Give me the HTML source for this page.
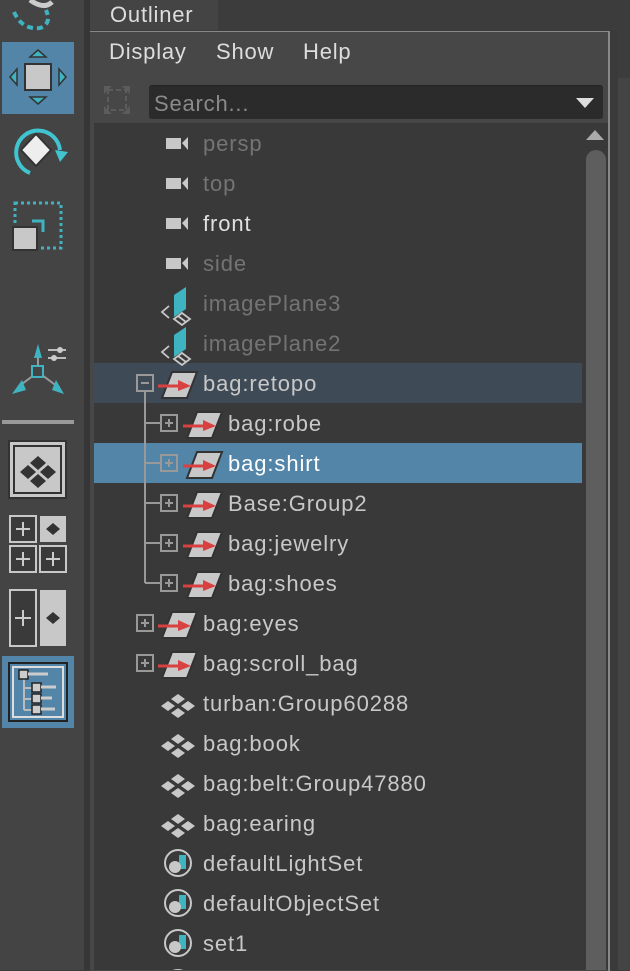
<!DOCTYPE html>
<html><head><style>
body{margin:0;width:630px;height:970px;background:#3c3c3c;position:relative;overflow:hidden;font-family:"Liberation Sans",sans-serif;}
.a{position:absolute}
.tb{left:0;top:0;width:84px;height:970px;background:#444}
.t{position:absolute;top:8px;font-size:22px;letter-spacing:0.9px;color:#c8c8c8;white-space:nowrap}
.m{position:absolute;font-size:22px;letter-spacing:0.8px;color:#ddd}
</style></head><body>
<div class="a tb"></div>
<div class="a" style="left:84px;top:0;width:6px;height:970px;background:#363636"></div>
<svg class="a" style="left:0;top:0" width="84" height="740">
<path d="M14 12 Q22 30 40 28 Q52 24 46 10" fill="none" stroke="#3fb4c0" stroke-width="4" stroke-dasharray="6 4"/>
<path d="M30 0 Q44 10 52 2" fill="none" stroke="#ccc" stroke-width="5"/>
<rect x="2" y="42" width="72" height="72" fill="#5285a8"/>
<rect x="25" y="64" width="26" height="26" fill="#c8c8c8" stroke="#333" stroke-width="2"/>
<path d="M38 50 L46 57 L30 57Z M38 104 L46 97 L30 97Z M10 77 L17 69 L17 85Z M66 77 L59 69 L59 85Z" fill="#3fb4c0" stroke="#333" stroke-width="1.5"/>
<path d="M30 173 A22 22 0 1 1 60 150" fill="none" stroke="#3fc4d0" stroke-width="4"/>
<path d="M55 150 L68 152 L60 162Z" fill="#3fc4d0"/>
<path d="M36 134 L51 150 L36 166 L21 150Z" fill="#eee" stroke="#333" stroke-width="2"/>
<rect x="15" y="203" width="46" height="45" fill="none" stroke="#3fb4c0" stroke-width="3" stroke-dasharray="3 3"/>
<path d="M32 221 H43 V232" fill="none" stroke="#3fb4c0" stroke-width="3"/>
<rect x="13" y="227" width="24" height="23" fill="#c8c8c8" stroke="#333" stroke-width="2"/>
<path d="M38 350 V372 M38 372 L18 387 M38 372 L58 387" stroke="#999" stroke-width="2"/>
<path d="M38 344 L34 358 L42 358Z M12 394 L22 380 L26 390Z M64 394 L52 390 L56 380Z" fill="#3fb4c0"/>
<rect x="32" y="366" width="11" height="11" fill="#444" stroke="#3fb4c0" stroke-width="2"/>
<path d="M48 350 H66 M48 358 H66" stroke="#bbb" stroke-width="2"/><circle cx="60" cy="350" r="3" fill="#ccc"/><circle cx="54" cy="358" r="3" fill="#ccc"/>
<rect x="2" y="420" width="72" height="4" fill="#999"/>
<rect x="9" y="441" width="57" height="57" fill="#c8c8c8" stroke="#333" stroke-width="2"/>
<rect x="14" y="446" width="47" height="47" fill="#c8c8c8" stroke="#333" stroke-width="2"/>
<path d="M38 456 L46 463 L38 470 L30 463Z M28 465 L36 472 L28 479 L20 472Z M48 465 L56 472 L48 479 L40 472Z M38 474 L46 481 L38 488 L30 481Z" fill="#333"/>
<g fill="#3a3a3a" stroke="#c8c8c8" stroke-width="2"><rect x="10" y="516" width="26" height="26"/><rect x="10" y="546" width="26" height="26"/><rect x="40" y="546" width="26" height="26"/></g>
<rect x="40" y="516" width="26" height="26" fill="#c8c8c8"/>
<path d="M23 522 V536 M16 529 H30 M23 552 V566 M16 559 H30 M53 552 V566 M46 559 H60" stroke="#ccc" stroke-width="2"/>
<path d="M53 523 L60 529 L53 535 L46 529Z" fill="#333"/>
<rect x="10" y="590" width="26" height="56" fill="#3a3a3a" stroke="#c8c8c8" stroke-width="2"/>
<rect x="40" y="590" width="26" height="56" fill="#c8c8c8"/>
<path d="M23 610 V626 M15 618 H31" stroke="#ccc" stroke-width="2"/>
<path d="M53 612 L60 618 L53 624 L46 618Z" fill="#333"/>
<rect x="2" y="656" width="72" height="72" fill="#5285a8"/>
<rect x="9" y="663" width="58" height="58" fill="none" stroke="#222" stroke-width="2"/>
<rect x="13" y="667" width="50" height="50" fill="none" stroke="#ddd" stroke-width="2"/>
<path d="M24 676 V710 M24 688 H36 M24 699 H36 M24 710 H36" stroke="#bbb" stroke-width="2"/>
<g fill="#ccc" stroke="#222" stroke-width="1.5"><rect x="19" y="670" width="9" height="9"/><rect x="32" y="683" width="9" height="9"/><rect x="32" y="694" width="9" height="9"/><rect x="32" y="705" width="9" height="9"/></g>
<path d="M28 674 H48 M41 687 H56 M41 698 H52 M41 709 H55" stroke="#ccc" stroke-width="3"/>
</svg>
<div class="a" style="left:90px;top:0;width:128px;height:30px;background:#444"></div>
<div class="m" style="left:110px;top:2px">Outliner</div>
<div class="a" style="left:90px;top:31px;width:518px;height:939px;background:#474747;border-top:1px solid #888;border-right:2px solid #888"></div>
<div class="a" style="left:610px;top:30px;width:8px;height:940px;background:#3a3a3a"></div>
<div class="a" style="left:618px;top:78px;width:12px;height:892px;background:#444"></div>
<div class="m" style="left:109px;top:39px">Display</div>
<div class="m" style="left:216px;top:39px">Show</div>
<div class="m" style="left:303px;top:39px">Help</div>
<svg class="a" style="left:100px;top:82px" width="36" height="36"><path d="M4 4 L12 4 L4 12Z M30 4 L22 4 L30 12Z M4 32 L12 32 L4 24Z M30 32 L22 32 L30 24Z" fill="#5c5c5c"/><rect x="8" y="8" width="18" height="20" fill="none" stroke="#5c5c5c" stroke-width="2" stroke-dasharray="5 3"/></svg>
<div class="a" style="left:149px;top:85px;width:454px;height:33px;background:#2b2b2b;border-radius:3px;border-top:1px solid #222"></div>
<div class="m" style="left:154px;top:91px;color:#8a8a8a">Search...</div>
<svg class="a" style="left:574px;top:96px" width="22" height="14"><path d="M2 2 H20 L11 12Z" fill="#ddd"/></svg>
<div class="a" style="left:94px;top:123px;width:514px;height:847px;background:#393939"></div>
<svg class="a" style="left:584px;top:126px" width="24" height="16"><path d="M2 14 H20 L11 4Z" fill="#aaa"/></svg>
<div class="a" style="left:586px;top:150px;width:20px;height:820px;background:#5e5e5e;border-radius:10px 10px 0 0"></div>
<div class="a" style="left:94px;top:363px;width:488px;height:40px;background:#3f4a57"></div>
<div class="a" style="left:94px;top:443px;width:488px;height:40px;background:#5285a8"></div>
<svg class="a" style="left:94px;top:123px" width="488" height="847">
<g stroke="#999" stroke-width="2" fill="none">
<path d="M51 268 V460 M51 300 H66 M51 340 H66 M51 380 H66 M51 420 H66 M51 460 H66"/>
<rect x="43" y="252" width="16" height="16"/><path d="M47 260 H55"/>
<g id="p"><rect x="67" y="292" width="16" height="16"/><path d="M71 300 H79 M75 296 V304"/></g>
<use href="#p" y="40"/><use href="#p" y="80"/><use href="#p" y="120"/><use href="#p" y="160"/>
<use href="#p" x="-24" y="200"/><use href="#p" x="-24" y="240"/>
</g>
<g id="cam" fill="#c8c8c8"><rect x="72" y="15" width="15" height="11"/><path d="M88 20 L94 14 V27Z"/></g>
<use href="#cam" y="40"/><use href="#cam" y="80"/><use href="#cam" y="120"/>
<g id="ip"><path d="M80 172 L92 164 V186 L80 194Z" fill="#3fb4c0"/><path d="M75 183 L68 189 L75 195 M80 196 L88 190 L96 196 L88 202Z M84 193 L92 199" fill="none" stroke="#c8c8c8" stroke-width="1.8"/></g>
<use href="#ip" y="40"/>
<g id="tr"><path d="M78 249 L103 249 L93 275 L68 275Z" fill="#c8c8c8" stroke="#333" stroke-width="2"/><path d="M64 263 H86" stroke="#d94040" stroke-width="3"/><path d="M84 257 L97 263 L84 268Z" fill="#d94040"/></g>
<use href="#tr" x="25" y="40"/><use href="#tr" x="25" y="80"/><use href="#tr" x="25" y="120"/><use href="#tr" x="25" y="160"/><use href="#tr" x="25" y="200"/>
<use href="#tr" y="240"/><use href="#tr" y="280"/>
<g id="gr" fill="#c8c8c8"><path d="M84 571 L91 576 L84 581 L77 576Z M74 578 L81 583 L74 588 L67 583Z M94 578 L101 583 L94 588 L87 583Z M84 585 L91 590 L84 595 L77 590Z"/></g>
<use href="#gr" y="40"/><use href="#gr" y="80"/><use href="#gr" y="120"/>
<g id="st"><circle cx="84" cy="740" r="13" fill="none" stroke="#c8c8c8" stroke-width="2"/><path d="M85 732 H92 V746 H85Z" fill="#3fb4c0"/><circle cx="81" cy="744" r="6" fill="#c8c8c8"/></g>
<use href="#st" y="40"/><use href="#st" y="80"/>
<circle cx="84" cy="860" r="13" fill="none" stroke="#c8c8c8" stroke-width="2"/>
</svg>
<div class="t" style="left:203px;top:131px;color:#747474">persp</div>
<div class="t" style="left:203px;top:171px;color:#747474">top</div>
<div class="t" style="left:203px;top:211px;color:#e0e0e0">front</div>
<div class="t" style="left:203px;top:251px;color:#747474">side</div>
<div class="t" style="left:203px;top:291px;color:#747474">imagePlane3</div>
<div class="t" style="left:203px;top:331px;color:#747474">imagePlane2</div>
<div class="t" style="left:203px;top:371px">bag:retopo</div>
<div class="t" style="left:228px;top:411px">bag:robe</div>
<div class="t" style="left:228px;top:451px;color:#fff">bag:shirt</div>
<div class="t" style="left:228px;top:491px">Base:Group2</div>
<div class="t" style="left:228px;top:531px">bag:jewelry</div>
<div class="t" style="left:228px;top:571px">bag:shoes</div>
<div class="t" style="left:203px;top:611px">bag:eyes</div>
<div class="t" style="left:203px;top:651px">bag:scroll_bag</div>
<div class="t" style="left:203px;top:691px">turban:Group60288</div>
<div class="t" style="left:203px;top:731px">bag:book</div>
<div class="t" style="left:203px;top:771px">bag:belt:Group47880</div>
<div class="t" style="left:203px;top:811px">bag:earing</div>
<div class="t" style="left:203px;top:851px">defaultLightSet</div>
<div class="t" style="left:203px;top:891px">defaultObjectSet</div>
<div class="t" style="left:203px;top:931px">set1</div>
</body></html>
